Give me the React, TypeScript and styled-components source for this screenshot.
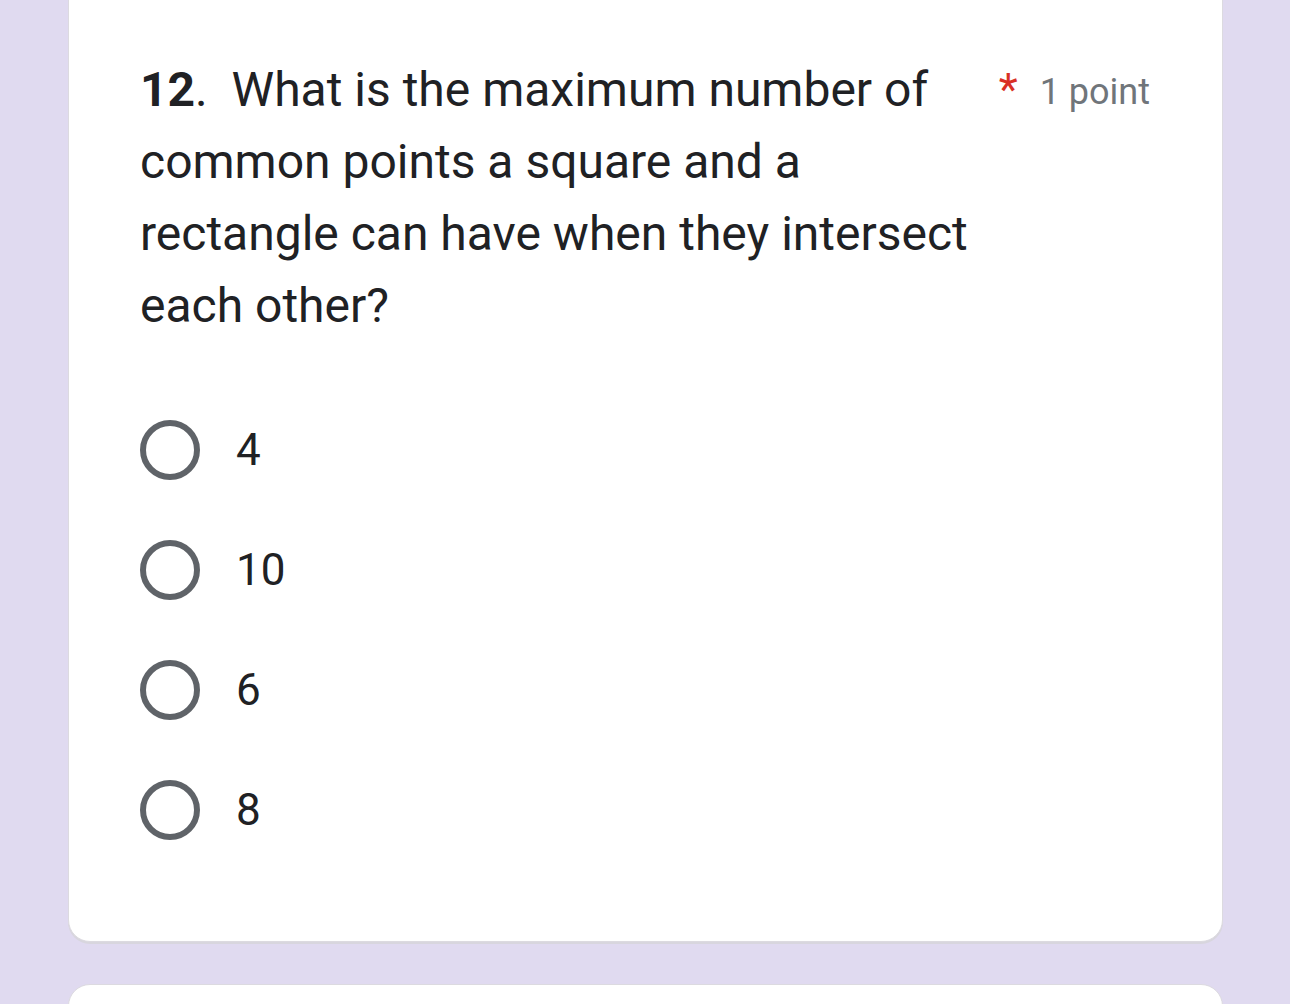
import React from "react";
import styled, { createGlobalStyle } from "styled-components";

const GlobalStyle = createGlobalStyle`
  html, body {
    margin: 0;
    padding: 0;
    background: #e0daf0;
    font-family: Roboto, "Noto Sans", "Liberation Sans", sans-serif;
    -webkit-font-smoothing: antialiased;
  }
  #root {
    width: 1290px;
    min-height: 1004px;
    overflow: hidden;
  }
`;

const Page = styled.main`
  display: flex;
  flex-direction: column;
  gap: 42px;
  padding: 0 67px 0 68px;
  margin-top: -30px;
  height: 1034px;
  overflow: hidden;
`;

const Card = styled.section`
  background: #ffffff;
  border-radius: 22px;
  border: 1px solid #dcdae0;
  box-shadow: 0 2px 0 #d8d6de;
  padding: 83px 72px 71px 71px;
  flex-shrink: 0;
`;

const Header = styled.div`
  display: flex;
  align-items: flex-start;
`;

const Title = styled.h2`
  flex: 1;
  min-width: 0;
  margin: 0;
  font-size: 48px;
  line-height: 72px;
  font-weight: 400;
  color: #202124;
  letter-spacing: 0;
`;

const Number = styled.span`
  font-weight: 700;
`;

const Required = styled.span`
  color: #d93025;
  font-size: 44px;
  line-height: 72px;
  margin: 0 22px 0 20px;
`;

const Points = styled.span`
  font-size: 36px;
  line-height: 72px;
  color: #70757a;
  padding-top: 2px;
  white-space: nowrap;
`;

const Options = styled.div`
  display: flex;
  flex-direction: column;
  margin-top: 48px;
`;

const Option = styled.label`
  display: flex;
  align-items: center;
  gap: 36px;
  height: 120px;
`;

const Radio = styled.span`
  width: 60px;
  height: 60px;
  box-sizing: border-box;
  border-radius: 50%;
  border: 6px solid #5f6368;
  flex-shrink: 0;
`;

const OptionText = styled.span`
  font-size: 44px;
  color: #202124;
  line-height: 60px;
`;

const options = ["4", "10", "6", "8"];

export default function App() {
  return (
    <>
      <GlobalStyle />
      <Page>
        <Card>
          <Header>
            <Title>
              <Number>12</Number>.&nbsp; What is the maximum number of common points a square and a
              rectangle can have when they intersect each other?
            </Title>
            <Required>*</Required>
            <Points>1 point</Points>
          </Header>
          <Options>
            {options.map((o) => (
              <Option key={o}>
                <Radio />
                <OptionText>{o}</OptionText>
              </Option>
            ))}
          </Options>
        </Card>
        <Card />
      </Page>
    </>
  );
}
